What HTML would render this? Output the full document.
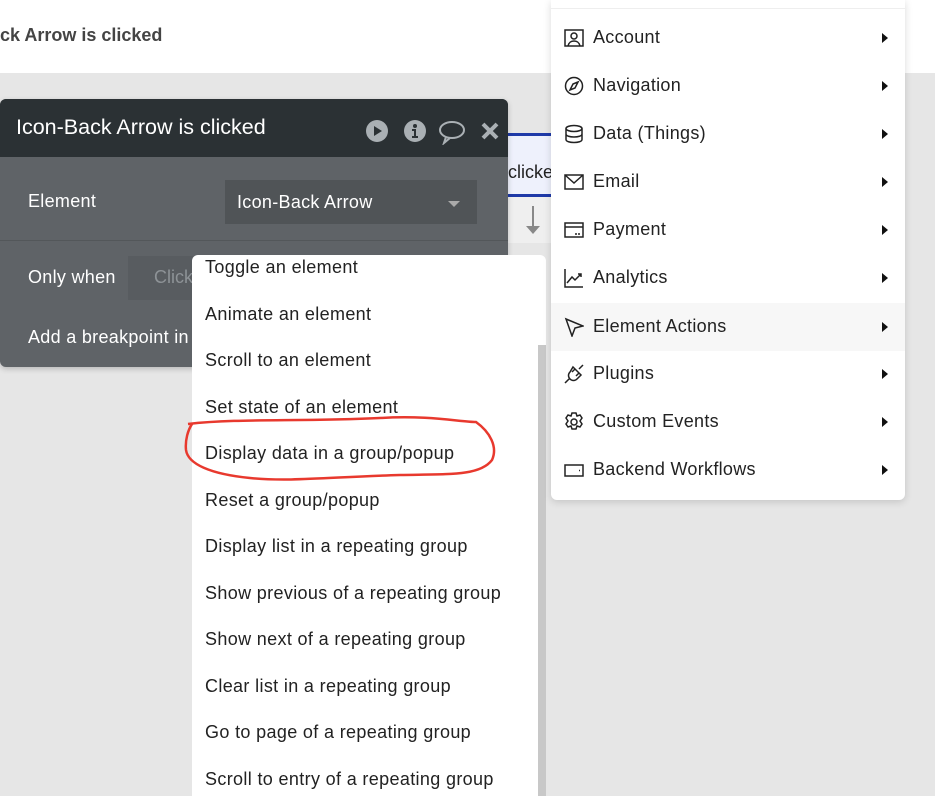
<!DOCTYPE html>
<html><head><meta charset="utf-8"><style>
*{margin:0;padding:0;box-sizing:border-box}
html,body{width:935px;height:796px;overflow:hidden}
body{background:#e6e6e6;font-family:"Liberation Sans",sans-serif;position:relative}
.abs{position:absolute}
.top{left:0;top:0;width:935px;height:73px;background:#fff}
.panel{left:0;top:99px;width:508px;height:268px;background:#5f6367;border-radius:6px;overflow:hidden;box-shadow:0 2px 6px rgba(0,0,0,.2)}
.ph{left:0;top:0;width:508px;height:58px;background:#2b3134;color:#fff;font-size:21.5px;padding:16px 16px}
.lbl{color:#fff;font-size:18px;letter-spacing:.3px}
.list{left:192px;top:255px;width:354px;height:541px;background:#fff;border-radius:6px 6px 0 0;overflow:hidden}
.it{position:absolute;left:13px;font-size:18px;letter-spacing:.35px;color:#222;white-space:nowrap}
.menu{left:551px;top:0;width:354px;height:500px;background:#fff;border-radius:0 0 6px 6px;box-shadow:0 2px 8px rgba(0,0,0,.15)}
.mi{position:absolute;left:0;width:354px;height:48px;font-size:18px;letter-spacing:.3px;color:#222}
.mi span{position:absolute;left:42px;top:13px}
.mi svg.ic{position:absolute;left:13px;top:14px}
.mi .ar{position:absolute;left:331px;top:19px;width:0;height:0;border-left:6px solid #111;border-top:5px solid transparent;border-bottom:5px solid transparent}
</style></head><body>
<div class="abs top"></div>
<div class="abs" style="left:0;top:25px;font-size:18px;font-weight:bold;color:#444">ck Arrow is clicked</div>
<div class="abs" style="left:490px;top:133px;width:61px;height:64px;background:#eef1fc;border-top:3px solid #1f3aa8;border-bottom:3px solid #1f3aa8"></div>
<div class="abs" style="left:508px;top:162px;font-size:18px;color:#222;width:43px;overflow:hidden;white-space:nowrap">clicked</div>
<div class="abs" style="left:490px;top:197px;width:61px;height:46px;background:#efefef"></div>
<div class="abs" style="left:532px;top:206px;width:2px;height:24px;background:#888"></div>
<div class="abs" style="left:526px;top:226px;border-top:8px solid #888;border-left:7px solid transparent;border-right:7px solid transparent"></div>
<div class="abs panel">
 <div class="abs ph">Icon-Back Arrow is clicked</div>
 <svg class="abs" style="left:365px;top:20px" width="24" height="24" viewBox="0 0 24 24"><circle cx="12" cy="12" r="11" fill="#aab0b4"/><path d="M9 7l8 5-8 5z" fill="#2b3134"/></svg>
 <svg class="abs" style="left:403px;top:20px" width="24" height="24" viewBox="0 0 24 24"><circle cx="12" cy="12" r="11" fill="#aab0b4"/><circle cx="12" cy="7" r="2" fill="#2b3134"/><path d="M9 10h4v7h2v2H9v-2h2v-5H9z" fill="#2b3134"/></svg>
 <svg class="abs" style="left:438px;top:20px" width="28" height="26" viewBox="0 0 28 26"><ellipse cx="14" cy="11" rx="12" ry="8" fill="none" stroke="#aab0b4" stroke-width="2"/><path d="M8 18l-2 6 6-5" fill="none" stroke="#aab0b4" stroke-width="2"/></svg>
 <svg class="abs" style="left:480px;top:22px" width="20" height="20" viewBox="0 0 20 20"><path d="M3 3l14 14M17 3L3 17" stroke="#aab0b4" stroke-width="4"/></svg>
 <div class="abs lbl" style="left:28px;top:92px">Element</div>
 <div class="abs" style="left:225px;top:81px;width:252px;height:44px;background:#505457"></div>
 <div class="abs lbl" style="left:237px;top:93px">Icon-Back Arrow</div>
 <div class="abs" style="left:448px;top:102px;border-top:6px solid #aaa;border-left:6px solid transparent;border-right:6px solid transparent"></div>
 <div class="abs" style="left:0;top:141px;width:508px;height:1px;background:#53575a"></div>
 <div class="abs lbl" style="left:28px;top:168px">Only when</div>
 <div class="abs" style="left:128px;top:157px;width:80px;height:44px;background:#585c60"></div>
 <div class="abs" style="left:154px;top:168px;font-size:18px;color:#8d9296">Click</div>
 <div class="abs lbl" style="left:28px;top:228px">Add a breakpoint in</div>
</div>
<div class="abs list">
 <div class="it" style="top:2px">Toggle an element</div>
 <div class="it" style="top:49px">Animate an element</div>
 <div class="it" style="top:95px">Scroll to an element</div>
 <div class="it" style="top:142px">Set state of an element</div>
 <div class="it" style="top:188px">Display data in a group/popup</div>
 <div class="it" style="top:235px">Reset a group/popup</div>
 <div class="it" style="top:281px">Display list in a repeating group</div>
 <div class="it" style="top:328px">Show previous of a repeating group</div>
 <div class="it" style="top:374px">Show next of a repeating group</div>
 <div class="it" style="top:421px">Clear list in a repeating group</div>
 <div class="it" style="top:467px">Go to page of a repeating group</div>
 <div class="it" style="top:514px">Scroll to entry of a repeating group</div>
 <div class="abs" style="left:346px;top:90px;width:8px;height:451px;background:#c8c8c8"></div>
</div>
<svg class="abs" style="left:180px;top:412px" width="320" height="76" viewBox="0 0 320 76"><path d="M8 12C60 6 120 10 200 6C250 3 280 10 296 10C310 20 318 35 312 48C300 64 270 62 220 63C150 65 110 70 70 66C30 62 8 52 6 38C5 28 8 18 12 12" fill="none" stroke="#e8392e" stroke-width="2.5"/></svg>
<div class="abs menu">
 <div class="abs" style="left:0;top:8px;width:354px;height:1px;background:#eee"></div>
 <div class="mi" style="top:14px"><svg class="ic" width="20" height="20" viewBox="0 0 20 20" fill="none" stroke="#222" stroke-width="1.5"><rect x="1" y="2" width="18" height="16"/><circle cx="10" cy="8" r="3"/><path d="M4 18c1-4 3-5 6-5s5 1 6 5"/></svg><span>Account</span><i class="ar"></i></div>
 <div class="mi" style="top:62px"><svg class="ic" width="20" height="20" viewBox="0 0 20 20" fill="none" stroke="#222" stroke-width="1.5"><circle cx="10" cy="10" r="8.5"/><path d="M14 6l-5 2-3 6 5-2z"/></svg><span>Navigation</span><i class="ar"></i></div>
 <div class="mi" style="top:110px"><svg class="ic" width="20" height="20" viewBox="0 0 20 20" fill="none" stroke="#222" stroke-width="1.5"><ellipse cx="10" cy="4.5" rx="8" ry="3"/><path d="M2 4.5v11c0 2 4 3 8 3s8-1 8-3v-11M2 10c0 2 4 3 8 3s8-1 8-3"/></svg><span>Data (Things)</span><i class="ar"></i></div>
 <div class="mi" style="top:158px"><svg class="ic" width="20" height="20" viewBox="0 0 20 20" fill="none" stroke="#222" stroke-width="1.5"><rect x="1" y="3" width="18" height="14"/><path d="M1 3l9 8 9-8"/></svg><span>Email</span><i class="ar"></i></div>
 <div class="mi" style="top:206px"><svg class="ic" width="20" height="20" viewBox="0 0 20 20" fill="none" stroke="#222" stroke-width="1.5"><rect x="1" y="3" width="18" height="14"/><path d="M1 7h18M11 14h2M14 14h2"/></svg><span>Payment</span><i class="ar"></i></div>
 <div class="mi" style="top:254px"><svg class="ic" width="20" height="20" viewBox="0 0 20 20" fill="none" stroke="#222" stroke-width="1.5"><path d="M1 1v18h18M3 15l5-6 3 3 6-6M14 6h3v3"/></svg><span>Analytics</span><i class="ar"></i></div>
 <div class="mi" style="top:303px;background:#f7f7f7"><svg class="ic" width="20" height="20" viewBox="0 0 20 20" fill="none" stroke="#222" stroke-width="1.5"><path d="M2 2l17 7-8 2-3 8z"/></svg><span>Element Actions</span><i class="ar"></i></div>
 <div class="mi" style="top:350px"><svg class="ic" width="20" height="20" viewBox="0 0 20 20" fill="none" stroke="#222" stroke-width="1.5"><path d="M1 19l4-4M19 1l-4 4M9 3l8 8-4 4c-2 2-5 2-7 0s-2-5 0-7zM8 8l3-3M12 12l3-3"/></svg><span>Plugins</span><i class="ar"></i></div>
 <div class="mi" style="top:398px"><svg class="ic" width="20" height="20" viewBox="0 0 20 20" fill="none" stroke="#222" stroke-width="1.5"><circle cx="10" cy="10" r="3"/><path d="M8 1h4l1 3 3-1 2 3-2 3 2 3-2 3-3-1-1 3H8l-1-3-3 1-2-3 2-3-2-3 2-3 3 1z"/></svg><span>Custom Events</span><i class="ar"></i></div>
 <div class="mi" style="top:446px"><svg class="ic" width="20" height="20" viewBox="0 0 20 20" fill="none" stroke="#222" stroke-width="1.5"><rect x="1" y="5" width="18" height="11"/><path d="M15 10.5h1"/></svg><span>Backend Workflows</span><i class="ar"></i></div>
</div>
</body></html>
